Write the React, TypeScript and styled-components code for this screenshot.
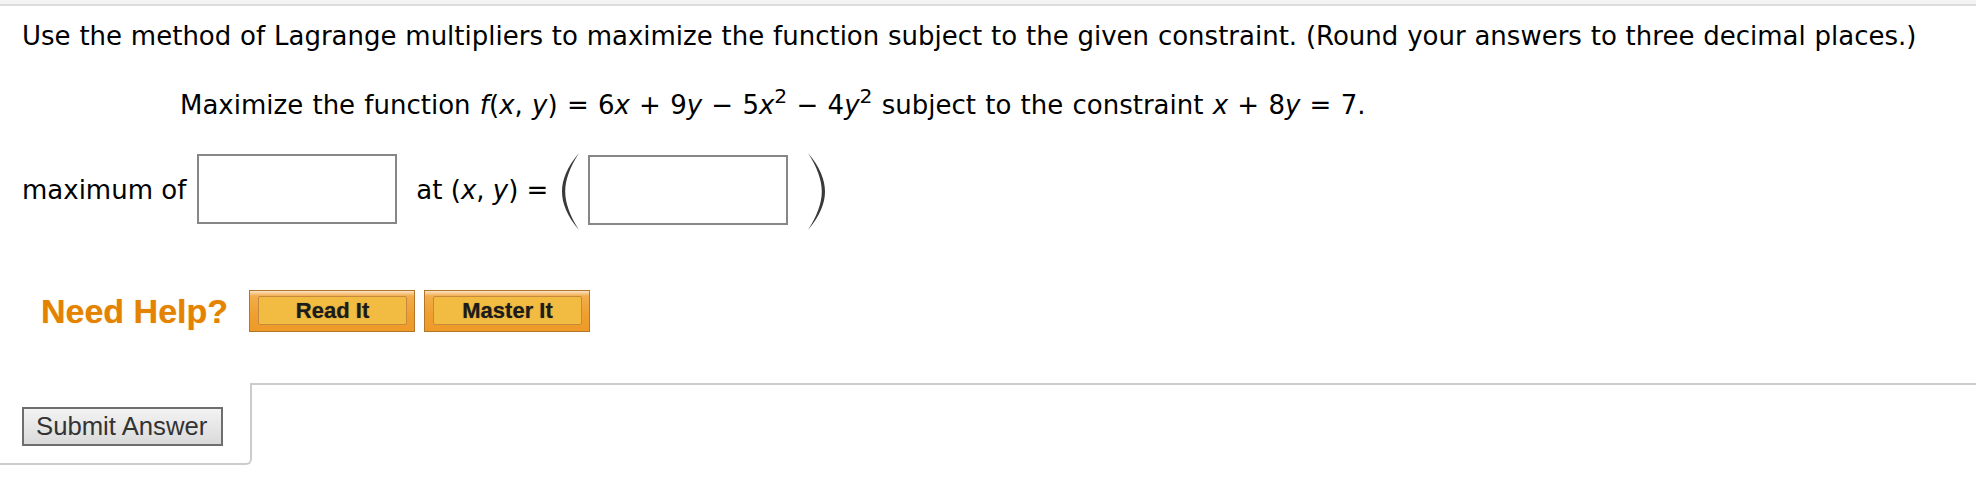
import React from "react"
import styled, { createGlobalStyle } from "styled-components"

const GlobalStyle = createGlobalStyle`
    html, body {
        margin: 0;
        padding: 0;
        background: #fff;
    }
`

export default function App() {
    return (
        <>
            <GlobalStyle />
            <TopBar />
            <Question>
                <Prompt>
                    Use the method of Lagrange multipliers to maximize the function subject to the given constraint. (Round your answers to three decimal places.)
                </Prompt>
                <Statement>
                    Maximize the function <Var>f</Var>(<Var>x</Var>, <Var>y</Var>) = 6<Var>x</Var> + 9<Var>y</Var> − 5<Var>x</Var><Sup>2</Sup> − 4<Var>y</Var><Sup>2</Sup> subject to the constraint <Var>x</Var> + 8<Var>y</Var> = 7.
                </Statement>
                <AnswerRow>
                    <Label>maximum of</Label>
                    <AnswerBox type="text" $gapLeft={11} />
                    <Label $gapLeft={19}>at (<Var>x</Var>, <Var>y</Var>) =</Label>
                    <Paren />
                    <AnswerBox type="text" $gapLeft={7} $shift={1} />
                    <Paren $right />
                </AnswerRow>
                <HelpRow>
                    <NeedHelp>Need Help?</NeedHelp>
                    <HelpButton>
                        <HelpButtonInner>Read It</HelpButtonInner>
                    </HelpButton>
                    <HelpButton>
                        <HelpButtonInner>Master It</HelpButtonInner>
                    </HelpButton>
                </HelpRow>
            </Question>
            <Footer>
                <SubmitCell>
                    <SubmitButton>Submit Answer</SubmitButton>
                </SubmitCell>
                <FeedbackCell />
            </Footer>
        </>
    )
}

// stretched delimiter, drawn like the MathJax one
const LEFT_PAREN = "M17 0 C5 14 0 27 0 38.5 C0 50 5 63 17 77 C8 63 3.2 50 3.2 38.5 C3.2 27 8 14 17 0 Z"
const RIGHT_PAREN = "M2 0 C14 14 19 27 19 38.5 C19 50 14 63 2 77 C11 63 15.8 50 15.8 38.5 C15.8 27 11 14 2 0 Z"

const Paren = ({ $right }: { $right?: boolean }) => (
    <ParenSvg width="19" height="77" viewBox="0 0 19 77" $right={$right}>
        <path d={$right ? RIGHT_PAREN : LEFT_PAREN} fill="#3a3a3a" />
    </ParenSvg>
)

const TopBar = styled.div`
    height: 4px;
    background: #f4f4f4;
    border-bottom: 2px solid #dcdcdc;
`

const Question = styled.div`
    padding: 15px 0 0 22px;
    font-family: "DejaVu Sans", Verdana, sans-serif;
    font-size: 26px;
    line-height: 30px;
    color: #000;
`

const Prompt = styled.div`
    white-space: nowrap;
    word-spacing: 0.55px;
`

const Statement = styled.div`
    margin: 39px 0 0 158px;
    white-space: nowrap;
    word-spacing: 1px;
`

const Var = styled.i`
    font-style: italic;
`

const Sup = styled.sup`
    font-size: 0.78em;
    line-height: 0;
    vertical-align: 0.55em;
`

const AnswerRow = styled.div`
    display: flex;
    align-items: center;
    margin-top: 28px;
    height: 82px;
`

const Label = styled.span<{ $gapLeft?: number }>`
    margin-left: ${p => p.$gapLeft ?? 0}px;
    padding-top: 2px;
    white-space: nowrap;
`

const AnswerBox = styled.input<{ $gapLeft: number; $shift?: number }>`
    box-sizing: border-box;
    width: 200px;
    height: 70px;
    margin: ${p => (p.$shift ?? 0) * 2}px 0 0 ${p => p.$gapLeft}px;
    border: 2px solid #878787;
    background: #fff;
    padding: 0;
    outline: none;
`

const ParenSvg = styled.svg<{ $right?: boolean }>`
    display: block;
    flex-shrink: 0;
    margin: 5px 0 0 ${p => (p.$right ? "18px" : "14px")};
`

const HelpRow = styled.div`
    display: flex;
    align-items: center;
    gap: 9px;
    margin-top: 60px;
    padding-left: 19px;
    height: 42px;
`

const NeedHelp = styled.span`
    font-family: "Liberation Sans", Arial, sans-serif;
    font-weight: bold;
    font-size: 34px;
    line-height: 38px;
    color: #e48300;
    margin-right: 12px;
    text-shadow: 0 0 1px rgba(228, 131, 0, 0.5);
`

const HelpButton = styled.div`
    box-sizing: border-box;
    width: 166px;
    height: 42px;
    padding: 5px 7px 6px 8px;
    border: 1px solid #b27628;
    background: linear-gradient(#fbe4c6 0, #f2ad4c 5px, #ef9f2e 60%, #ee9a29 100%);
    display: flex;
`

const HelpButtonInner = styled.div`
    flex: 1;
    display: flex;
    align-items: center;
    justify-content: center;
    border: 1px solid #c78a3c;
    border-radius: 2px;
    background: #f2bc43;
    font-family: "Liberation Sans", Arial, sans-serif;
    font-weight: bold;
    font-size: 22px;
    color: #1c1c1c;
    text-shadow: 0 0 1px rgba(0, 0, 0, 0.5);
`

const Footer = styled.div`
    display: flex;
    align-items: flex-start;
    margin-top: 51px;
`

const SubmitCell = styled.div`
    box-sizing: border-box;
    width: 252px;
    padding: 24px 0 17px 22px;
    border-right: 2px solid #cccccc;
    border-bottom: 2px solid #cccccc;
    border-bottom-right-radius: 6px;
`

const FeedbackCell = styled.div`
    flex: 1;
    margin-left: -2px;
    border-top: 2px solid #cccccc;
    border-top-left-radius: 3px;
`

const SubmitButton = styled.button`
    box-sizing: border-box;
    display: block;
    width: 201px;
    height: 39px;
    padding: 0 0 0 12px;
    border: 2px solid #6e6e6e;
    border-radius: 0;
    background: linear-gradient(#f3f3f3, #dadada);
    font-family: "Liberation Sans", Arial, sans-serif;
    font-size: 25.7px;
    color: #333;
    text-align: left;
    line-height: 35px;
`
